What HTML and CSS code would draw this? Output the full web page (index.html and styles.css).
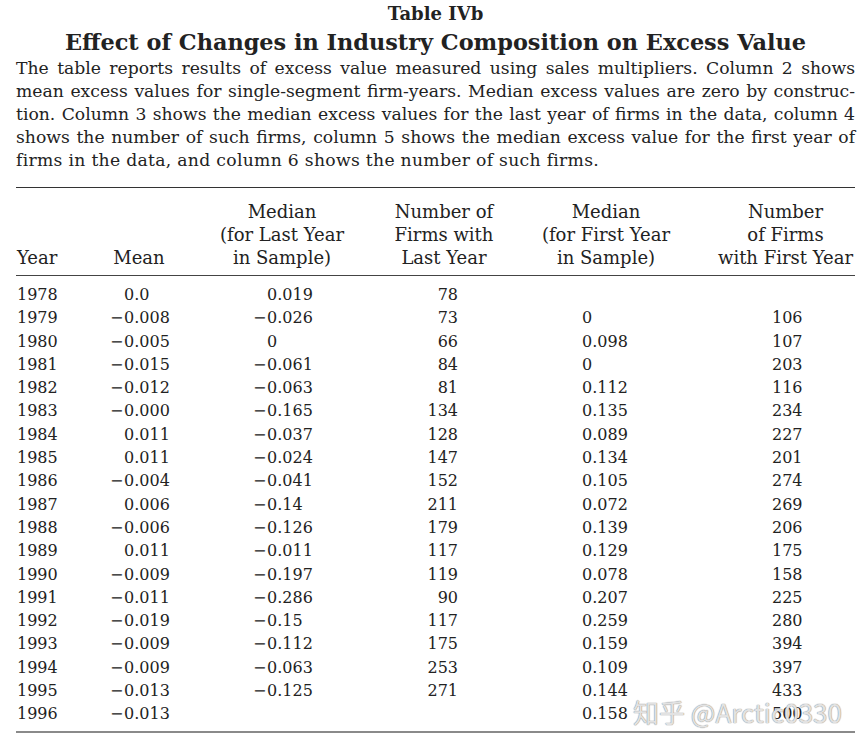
FILE: index.html
```html
<!DOCTYPE html>
<html lang="en">
<head>
<meta charset="utf-8">
<title>Table IVb</title>
<link rel="stylesheet" href="styles.css">
</head>
<body>
<div class="page">
  <div class="table-no">Table IVb</div>
  <h1 class="title">Effect of Changes in Industry Composition on Excess Value</h1>
  <div class="caption">
    <div class="line">The table reports results of excess value measured using sales multipliers. Column 2 shows</div>
    <div class="line">mean excess values for single-segment firm-years. Median excess values are zero by construc-</div>
    <div class="line">tion. Column 3 shows the median excess values for the last year of firms in the data, column 4</div>
    <div class="line">shows the number of such firms, column 5 shows the median excess value for the first year of</div>
    <div class="line last">firms in the data, and column 6 shows the number of such firms.</div>
  </div>

  <div class="tbl">
    <div class="row head">
      <div class="c1 hb">Year</div>
      <div class="c2 hb">Mean</div>
      <div class="c3">Median<br>(for Last Year<br>in Sample)</div>
      <div class="c4">Number of<br>Firms with<br>Last Year</div>
      <div class="c5">Median<br>(for First Year<br>in Sample)</div>
      <div class="c6">Number<br>of Firms<br>with First Year</div>
    </div>
    <div class="body">
      <div class="row"><div class="c1">1978</div><div class="c2"><span class="s"></span>0.0</div><div class="c3"><span class="s"></span>0.019</div><div class="c4">78</div><div class="c5"></div><div class="c6"></div></div>
      <div class="row"><div class="c1">1979</div><div class="c2"><span class="s">−</span>0.008</div><div class="c3"><span class="s">−</span>0.026</div><div class="c4">73</div><div class="c5">0</div><div class="c6">106</div></div>
      <div class="row"><div class="c1">1980</div><div class="c2"><span class="s">−</span>0.005</div><div class="c3"><span class="s"></span>0</div><div class="c4">66</div><div class="c5">0.098</div><div class="c6">107</div></div>
      <div class="row"><div class="c1">1981</div><div class="c2"><span class="s">−</span>0.015</div><div class="c3"><span class="s">−</span>0.061</div><div class="c4">84</div><div class="c5">0</div><div class="c6">203</div></div>
      <div class="row"><div class="c1">1982</div><div class="c2"><span class="s">−</span>0.012</div><div class="c3"><span class="s">−</span>0.063</div><div class="c4">81</div><div class="c5">0.112</div><div class="c6">116</div></div>
      <div class="row"><div class="c1">1983</div><div class="c2"><span class="s">−</span>0.000</div><div class="c3"><span class="s">−</span>0.165</div><div class="c4">134</div><div class="c5">0.135</div><div class="c6">234</div></div>
      <div class="row"><div class="c1">1984</div><div class="c2"><span class="s"></span>0.011</div><div class="c3"><span class="s">−</span>0.037</div><div class="c4">128</div><div class="c5">0.089</div><div class="c6">227</div></div>
      <div class="row"><div class="c1">1985</div><div class="c2"><span class="s"></span>0.011</div><div class="c3"><span class="s">−</span>0.024</div><div class="c4">147</div><div class="c5">0.134</div><div class="c6">201</div></div>
      <div class="row"><div class="c1">1986</div><div class="c2"><span class="s">−</span>0.004</div><div class="c3"><span class="s">−</span>0.041</div><div class="c4">152</div><div class="c5">0.105</div><div class="c6">274</div></div>
      <div class="row"><div class="c1">1987</div><div class="c2"><span class="s"></span>0.006</div><div class="c3"><span class="s">−</span>0.14</div><div class="c4">211</div><div class="c5">0.072</div><div class="c6">269</div></div>
      <div class="row"><div class="c1">1988</div><div class="c2"><span class="s">−</span>0.006</div><div class="c3"><span class="s">−</span>0.126</div><div class="c4">179</div><div class="c5">0.139</div><div class="c6">206</div></div>
      <div class="row"><div class="c1">1989</div><div class="c2"><span class="s"></span>0.011</div><div class="c3"><span class="s">−</span>0.011</div><div class="c4">117</div><div class="c5">0.129</div><div class="c6">175</div></div>
      <div class="row"><div class="c1">1990</div><div class="c2"><span class="s">−</span>0.009</div><div class="c3"><span class="s">−</span>0.197</div><div class="c4">119</div><div class="c5">0.078</div><div class="c6">158</div></div>
      <div class="row"><div class="c1">1991</div><div class="c2"><span class="s">−</span>0.011</div><div class="c3"><span class="s">−</span>0.286</div><div class="c4">90</div><div class="c5">0.207</div><div class="c6">225</div></div>
      <div class="row"><div class="c1">1992</div><div class="c2"><span class="s">−</span>0.019</div><div class="c3"><span class="s">−</span>0.15</div><div class="c4">117</div><div class="c5">0.259</div><div class="c6">280</div></div>
      <div class="row"><div class="c1">1993</div><div class="c2"><span class="s">−</span>0.009</div><div class="c3"><span class="s">−</span>0.112</div><div class="c4">175</div><div class="c5">0.159</div><div class="c6">394</div></div>
      <div class="row"><div class="c1">1994</div><div class="c2"><span class="s">−</span>0.009</div><div class="c3"><span class="s">−</span>0.063</div><div class="c4">253</div><div class="c5">0.109</div><div class="c6">397</div></div>
      <div class="row"><div class="c1">1995</div><div class="c2"><span class="s">−</span>0.013</div><div class="c3"><span class="s">−</span>0.125</div><div class="c4">271</div><div class="c5">0.144</div><div class="c6">433</div></div>
      <div class="row"><div class="c1">1996</div><div class="c2"><span class="s">−</span>0.013</div><div class="c3"></div><div class="c4"></div><div class="c5">0.158</div><div class="c6">500</div></div>
    </div>
    <div class="watermark">知乎 @Arctic0330</div>
  </div>
</div>
</body>
</html>
```

FILE: styles.css
```css
html, body {
  margin: 0;
  padding: 0;
  background: #ffffff;
}

body {
  font-family: "DejaVu Serif", "Liberation Serif", serif;
  color: #222222;
  font-size: 16px;
}

.page {
  width: 839px;
  margin-left: 16px;
  padding-top: 3px;
}

.table-no {
  font-weight: bold;
  font-size: 18px;
  line-height: 21px;
  text-align: center;
}

.title {
  margin: 4px 0 0 0;
  font-size: 22.4px;
  line-height: 28px;
  font-weight: bold;
  text-align: center;
}

.caption {
  margin-top: 1px;
  font-size: 17.2px;
  line-height: 23px;
}

.caption .line {
  text-align: justify;
  text-align-last: justify;
  white-space: nowrap;
}

.caption .line.last {
  text-align-last: left;
  letter-spacing: 0.3px;
}

.tbl {
  position: relative;
  margin-top: 15px;
  border-top: 1px solid #333333;
  border-bottom: 2px solid #8a8a8a;
}

.row {
  display: grid;
  grid-template-columns: 74px 98px 188px 136px 188px 155px;
}

.head {
  padding: 12px 0 6px 0;
  font-size: 18px;
  line-height: 23px;
  border-bottom: 1px solid #444444;
  text-align: center;
  align-items: end;
}

.head .c1 {
  text-align: left;
  padding-left: 1px;
}

.head .c6 {
  padding-left: 16px;
  white-space: nowrap;
}

.body {
  padding: 7px 0 5px 0;
}

.body .row {
  line-height: 23.3px;
  height: 23.3px;
}

.body .c1 { padding-left: 1px; }
.body .c2 { padding-left: 20px; }
.body .c3 { padding-left: 65px; }
.body .c4 { text-align: right; padding-right: 54px; }
.body .c5 { padding-left: 70px; }
.body .c6 { padding-left: 72px; }

.s {
  display: inline-block;
  width: 14px;
}

.watermark {
  position: absolute;
  left: 617px;
  bottom: 3px;
  font-family: "Noto Sans CJK SC", "Noto Sans", sans-serif;
  font-size: 26px;
  line-height: 32px;
  color: rgba(255, 255, 255, 0.75);
  text-shadow: 0 0 1px #8c8c8c, 0 0 1px #8c8c8c;
  white-space: nowrap;
}
```
